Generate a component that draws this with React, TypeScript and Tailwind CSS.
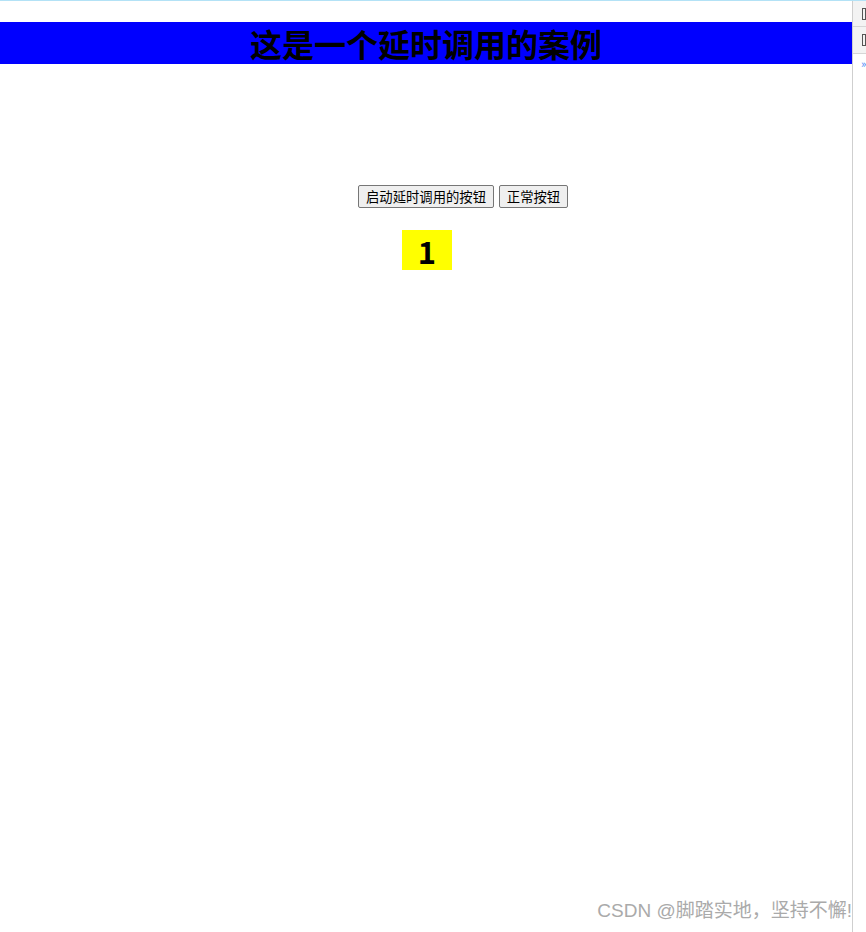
export default function App() {
  const cjk = { fontFamily: '"Microsoft YaHei", "Noto Sans CJK SC", "Noto Sans", sans-serif' };
  return (
    <div className="flex h-[932px] w-[866px] flex-col overflow-hidden bg-white" style={cjk}>
      <div className="h-px w-full bg-[#b3e2f6]" />
      <div className="flex flex-1">
        <main className="relative flex w-[852px] flex-col">
          <h1 className="mt-[21px] h-[42px] bg-[#0000ff] text-center text-[32px] font-bold leading-[42px] text-black">
            这是一个延时调用的案例
          </h1>
          <div className="mt-[121px] flex gap-[5px] pl-[358px]">
            <button className="h-[23px] w-[136px] rounded-[2px] border border-[#767676] bg-[#efefef] text-[13.33px] leading-none text-black">
              启动延时调用的按钮
            </button>
            <button className="h-[23px] w-[69px] rounded-[2px] border border-[#767676] bg-[#efefef] text-[13.33px] leading-none text-black">
              正常按钮
            </button>
          </div>
          <div className="ml-[402px] mt-[22px] flex h-[40px] w-[50px] items-center justify-center bg-[#ffff00] text-[31px] font-bold leading-none text-black">
            1
          </div>
          <div
            className="absolute bottom-[12px] right-0 text-[19px] leading-none text-[#aaaaaa]"
            style={{ fontFamily: '"Liberation Sans", "Noto Sans CJK SC", sans-serif' }}
          >
            CSDN @脚踏实地，坚持不懈!
          </div>
        </main>
        <aside className="flex w-[14px] flex-col border-l border-[#cfcfcf] bg-[#f3f3f3]">
          <div className="flex h-[26px] items-center border-b border-[#d6d6d6] pl-[9px]">
            <div className="h-[12px] w-[6px] border border-[#555]" />
          </div>
          <div className="flex h-[27px] items-center border-b border-[#d6d6d6] pl-[9px]">
            <div className="h-[12px] w-[6px] border border-[#555]" />
          </div>
          <div className="bg-white pl-[8px] pt-[4px] text-[11px] leading-none text-[#3b82f6]">»</div>
          <div className="flex-1 bg-white" />
        </aside>
      </div>
    </div>
  );
}
